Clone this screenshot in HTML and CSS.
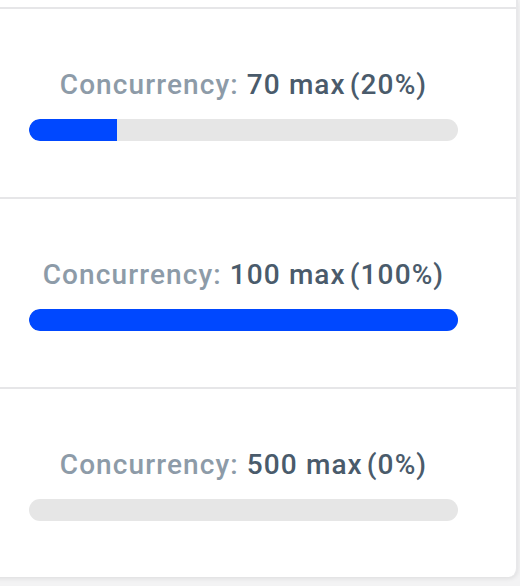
FILE: index.html
```html
<!DOCTYPE html>
<html>
<head>
<meta charset="utf-8">
<link rel="stylesheet" href="styles.css">
</head>
<body>
<div class="card">
  <div class="row row-top"></div>
  <div class="row">
    <div class="label"><span class="key">Concurrency:</span> <span class="val">70 max <span class="pct">(20%)</span></span></div>
    <div class="track"><div class="fill" style="width:20.5%"></div></div>
  </div>
  <div class="row">
    <div class="label"><span class="key">Concurrency:</span> <span class="val">100 max <span class="pct">(100%)</span></span></div>
    <div class="track"><div class="fill" style="width:100%"></div></div>
  </div>
  <div class="row">
    <div class="label"><span class="key">Concurrency:</span> <span class="val">500 max <span class="pct">(0%)</span></span></div>
    <div class="track"><div class="fill" style="width:0%"></div></div>
  </div>
</div>
</body>
</html>
```

FILE: styles.css
```css
html, body {
  margin: 0;
  padding: 0;
  background: #f3f3f4;
}
body {
  font-family: Roboto, "Liberation Sans", sans-serif;
  width: 520px;
  height: 586px;
  overflow: hidden;
}
.card {
  margin-left: -29px;
  width: 545px;
  background: #fff;
  border-right: 2px solid #e8e8ea;
  border-radius: 0 0 9px 0;
  box-shadow: 0 2px 4px rgba(0,0,0,0.08);
}
.row {
  padding: 61px 58px 56px 58px;
  border-top: 2px solid #e6e6e8;
  display: flex;
  flex-direction: column;
  align-items: stretch;
  gap: 19px;
}
.row-top {
  border-top: none;
  padding: 0;
  height: 7px;
}
.label {
  height: 30px;
  line-height: 30px;
  text-align: center;
  font-size: 28px;
  font-weight: 500;
  letter-spacing: 1.1px;
  white-space: nowrap;
}
.key { color: #8d9ba8; }
.val { color: #4a5b6b; }
.pct { margin-left: -4px; }
.track {
  height: 22px;
  border-radius: 11px;
  background: #e6e6e6;
  overflow: hidden;
}
.fill {
  height: 100%;
  background: #0048ff;
  border-radius: 11px 0 0 11px;
}
```
